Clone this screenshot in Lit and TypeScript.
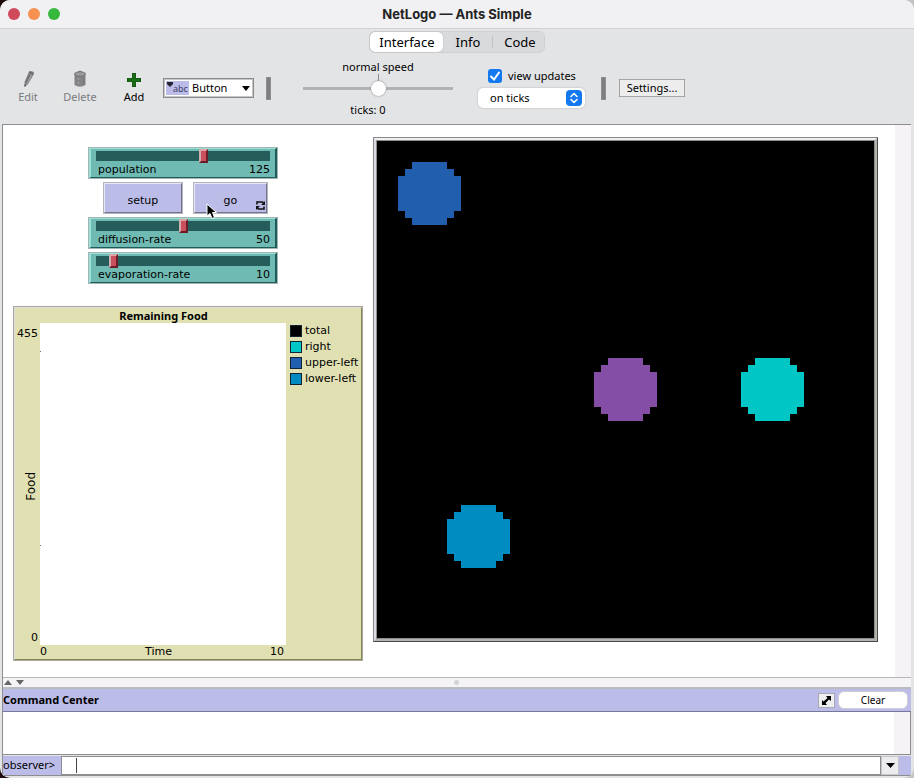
import { LitElement, html, css, svg } from "lit";
import { customElement, property } from "lit/decorators.js";

const PATCHES = 71;

/** Rows of one nine-patch-wide disc: [inset, top, height]. */
const DISC_ROWS = [
  [2, 0, 9],
  [1, 1, 7],
  [0, 2, 5],
];

const DISCS = [
  { name: "upper-left food", x: -28, y: 28, color: "#215fae" },
  { name: "nest", x: 0, y: 0, color: "#844ea7" },
  { name: "right food", x: 21, y: 0, color: "#00c6c6" },
  { name: "lower-left food", x: -21, y: -21, color: "#008cc1" },
];

const PENS = [
  { name: "total", color: "#000000" },
  { name: "right", color: "#00c6c6" },
  { name: "upper-left", color: "#215fae" },
  { name: "lower-left", color: "#008cc1" },
];

@customElement("model-slider")
class ModelSlider extends LitElement {
  @property() name = "";
  @property({ type: Number }) value = 0;
  @property({ type: Number }) max = 100;

  static styles = css`
    :host {
      display: block;
      box-sizing: border-box;
      height: 32px;
      padding: 0 5px;
      background: #6fbab2;
      border: 3px solid;
      border-width: 2px 3px 2px 3px;
      border-color: #9adfd8 #1f5c58 #1f5c58 #9adfd8;
      outline: 1px solid #a3b6b4;
      outline-offset: -1px;
      font: 11px/14px "DejaVu Sans", sans-serif;
      color: #000;
    }
    .range {
      appearance: none;
      display: block;
      box-sizing: border-box;
      width: 100%;
      height: 14px;
      margin: 0;
      background: linear-gradient(#265c59, #265c59) center 2px / 100% 10px no-repeat;
    }
    .range::-webkit-slider-thumb {
      appearance: none;
      box-sizing: border-box;
      width: 9px;
      height: 14px;
      background: #c9505c;
      border: 2px solid;
      border-color: #dfa3a3 #6b1e28 #6b1e28 #cdb0b0;
    }
    .caption {
      display: flex;
      justify-content: space-between;
      padding-left: 2px;
    }
  `;

  render() {
    return html`
      <input class="range" id="range" type="range" min="0" max=${this.max} .value=${String(this.value)} />
      <div class="caption">
        <label for="range">${this.name}</label>
        <output for="range">${this.value}</output>
      </div>
    `;
  }
}

@customElement("world-view")
class WorldView extends LitElement {
  static styles = css`
    :host {
      display: block;
      box-sizing: border-box;
      border: 1px solid;
      border-color: #8a8a8a #4a4a4a #4a4a4a #8a8a8a;
    }
    .bevel {
      border: 2px solid;
      border-color: #efefef #b4b4ae #b4b4ae #dcdce4;
    }
    .world {
      display: block;
      width: 100%;
      box-sizing: border-box;
      border: 1px solid #8e8e8e;
      background: #000;
    }
  `;

  render() {
    const mid = (PATCHES - 1) / 2;
    return html`
      <div class="bevel">
        <svg class="world" viewBox="0 0 71 71" shape-rendering="crispEdges" role="img" aria-label="World">
          ${DISCS.map(
            (d) => svg`<g fill=${d.color} aria-label=${d.name}>
              ${DISC_ROWS.map(
                ([inset, top, height]) => svg`<rect
                  x=${mid + d.x - 4 + inset} y=${mid - d.y - 4 + top}
                  width=${9 - inset * 2} height=${height}></rect>`
              )}
            </g>`
          )}
        </svg>
      </div>
    `;
  }
}

@customElement("model-plot")
class ModelPlot extends LitElement {
  static styles = css`
    :host {
      display: grid;
      box-sizing: border-box;
      height: 355px;
      grid-template: 15px 1fr 14px / 25px 1fr 75px;
      background: #e0e0b3;
      border: 2px solid;
      border-color: #dedee0 #85854f #85854f #dedee0;
      outline: 1px solid #a8a8a0;
      outline-offset: -1px;
      font: 11px/14px "DejaVu Sans", sans-serif;
      color: #000;
    }
    .title {
      grid-column: 1 / 3;
      margin: 0;
      padding-left: 26px;
      text-align: center;
      font: bold 11px/15px "Noto Sans", sans-serif;
    }
    .y-axis {
      grid-column: 1;
      grid-row: 2;
      display: flex;
      flex-direction: column;
      justify-content: space-between;
      align-items: flex-end;
      padding: 4px 2px 0 0;
    }
    .y-name {
      writing-mode: vertical-rl;
      rotate: 180deg;
      font-size: 12px;
    }
    .area {
      background: linear-gradient(#777, #777) 0 28px / 1px 1px no-repeat, linear-gradient(#777, #777) 0 222px / 1px 1px
        no-repeat, #fff;
      grid-column: 2;
      grid-row: 2;
    }
    .x-axis {
      grid-column: 2;
      grid-row: 3;
      display: flex;
      justify-content: space-between;
      padding-right: 2px;
    }
    .legend {
      grid-column: 3;
      grid-row: 2;
      list-style: none;
      margin: 0;
      padding: 0 0 0 4px;
    }
    .pen {
      display: flex;
      align-items: center;
      gap: 3px;
      height: 16px;
      white-space: nowrap;
    }
    .swatch {
      box-sizing: border-box;
      flex: none;
      width: 12px;
      height: 12px;
      border: 1px solid #123;
    }
  `;

  render() {
    return html`
      <h2 class="title">Remaining Food</h2>
      <div class="y-axis"><span>455</span><span class="y-name">Food</span><span>0</span></div>
      <div class="area"></div>
      <div class="x-axis"><span>0</span><span>Time</span><span>10</span></div>
      <ul class="legend">
        ${PENS.map(
          (p) => html`<li class="pen"><span class="swatch" style="background:${p.color}"></span>${p.name}</li>`
        )}
      </ul>
    `;
  }
}

@customElement("app-root")
class AppRoot extends LitElement {
  static styles = css`
    :host {
      display: block;
      min-height: 100vh;
      background: linear-gradient(90deg, #1d0a0c 50%, #c4c4c6 50%);
      font: 11px/14px "Noto Sans", sans-serif;
      color: #000;
    }
    * {
      box-sizing: border-box;
    }
    button,
    select,
    input {
      font: inherit;
      color: inherit;
    }
    .window {
      display: flex;
      flex-direction: column;
      min-height: 100vh;
      background: #e3e4e6;
      border-radius: 10px;
      overflow: hidden;
    }
    .titlebar {
      display: grid;
      grid-template-columns: 1fr auto 1fr;
      align-items: center;
      height: 29px;
      padding: 0 8px;
      background: #f1f0f2;
      border-bottom: 1px solid #d2d2d4;
    }
    .lights {
      display: flex;
      gap: 8px;
    }
    .light {
      width: 12px;
      height: 12px;
      padding: 0;
      border: 0;
      border-radius: 50%;
    }
    .close {
      background: #d04a5c;
    }
    .minimise {
      background: #f79150;
    }
    .maximise {
      background: #36b83c;
    }
    .title {
      margin: 0;
      font: bold 13px/16px Inter, sans-serif;
      color: #222;
    }
    .tabs {
      display: flex;
      align-self: center;
      margin-top: 2px;
      height: 22px;
      background: #d9dadc;
      border: 1px solid #d0d0d2;
      border-radius: 6px;
      font-size: 13px;
    }
    .tab {
      position: relative;
      padding: 0 12px;
      border: 0;
      border-radius: 5px;
      background: none;
      line-height: 18px;
    }
    .tab.selected {
      padding: 0 9px;
      background: #fff;
      box-shadow: 0 0 1px #888;
    }
    .tab + .tab + .tab {
      padding-right: 8px;
    }
    .tab + .tab + .tab::before {
      content: "";
      position: absolute;
      left: 0;
      top: 4px;
      height: 12px;
      border-left: 1px solid #c2c2c4;
    }
    .toolbar {
      display: flex;
      align-items: center;
      height: 71px;
      padding: 0 0 1px 15px;
    }
    .tool {
      display: flex;
      flex-direction: column;
      align-items: center;
      gap: 2px;
      padding: 0 0 2px;
      border: 0;
      background: none;
      color: #000;
    }
    .tool:disabled {
      color: #7c7c7e;
    }
    .tool svg {
      display: block;
    }
    .edit {
      width: 26px;
    }
    .delete {
      width: 36px;
      margin-left: 21px;
    }
    .add {
      width: 26px;
      margin-left: 23px;
    }
    .picker {
      position: relative;
      margin-left: 16px;
    }
    .picker select {
      appearance: none;
      display: block;
      width: 91px;
      height: 20px;
      padding: 0 0 0 28px;
      border: 1px solid #8c8c8e;
      outline: 1px solid #c6c6c8;
      outline-offset: -2px;
      border-radius: 0;
      background: #fff;
    }
    .picker-icon {
      position: absolute;
      left: 3px;
      top: 3px;
      display: flex;
      width: 23px;
      height: 14px;
      background: #bcbce9;
      pointer-events: none;
    }
    .picker-icon svg {
      flex: none;
      margin: 1px 0 0 1px;
    }
    .picker-text {
      color: #3d3d66;
      font: 9px/16px "Noto Sans", sans-serif;
    }
    .arrow {
      position: absolute;
      right: 4px;
      top: 8px;
      pointer-events: none;
    }
    .divider {
      width: 5px;
      height: 23px;
      margin-left: 12px;
      background: #7e7e80;
      border: 1px solid #8e8e90;
    }
    .speed {
      display: flex;
      flex-direction: column;
      align-items: center;
      width: 150px;
      margin-left: 32px;
    }
    .notch {
      width: 1px;
      height: 7px;
      background: #8c8c8e;
    }
    .speed-range {
      appearance: none;
      width: 100%;
      height: 15px;
      margin: 0 0 7px;
      background: linear-gradient(#b2b2b4, #b2b2b4) center / 100% 3px no-repeat;
    }
    .speed-range::-webkit-slider-thumb {
      appearance: none;
      width: 15px;
      height: 15px;
      border-radius: 50%;
      background: #fff;
      box-shadow: 0 0 2px #777;
    }
    .ticks {
      margin-right: 20px;
    }
    .updates {
      display: flex;
      flex-direction: column;
      gap: 5px;
      width: 107px;
      margin-left: 25px;
    }
    .check {
      display: flex;
      align-items: center;
      gap: 6px;
      padding-left: 10px;
    }
    .check input {
      appearance: none;
      width: 14px;
      height: 14px;
      margin: 0;
      border-radius: 3px;
      background: #1479ee;
    }
    .check-box {
      position: relative;
      display: flex;
    }
    .check-box svg {
      position: absolute;
      inset: 0;
      pointer-events: none;
    }
    .mode {
      position: relative;
    }
    .mode select {
      appearance: none;
      display: block;
      width: 100%;
      height: 20px;
      padding: 0 12px;
      border: 0;
      border-radius: 5px;
      background: #fff;
      box-shadow: 0 0 2px #aaa;
    }
    .mode svg {
      position: absolute;
      right: 3px;
      top: 2px;
      pointer-events: none;
    }
    .updates + .divider {
      margin-left: 16px;
    }
    .settings {
      width: 66px;
      height: 18px;
      margin-left: 13px;
      padding: 0;
      border: 1px solid #a4a4a6;
      background: #ededee;
      line-height: 14px;
    }
    .body {
      display: flex;
      flex: 1;
      flex-direction: column;
      margin: 0 3px 2px 2px;
      border: solid #8e8e90;
      border-width: 1px 0 1px 1px;
      background: #fff;
    }
    .workspace {
      display: flex;
      flex: 1;
      align-items: flex-start;
      gap: 10px;
      padding: 12px 0 16px 10px;
      background: linear-gradient(#f5f3f6, #f5f3f6) right / 16px 100% no-repeat;
    }
    .side {
      flex: none;
      width: 350px;
      padding-top: 10px;
    }
    .controls {
      display: flex;
      flex-direction: column;
      gap: 3px;
      width: 190px;
      margin: 0 0 22px 75px;
    }
    .actions {
      display: flex;
      gap: 10px;
      padding: 0 10px 0 15px;
    }
    .action {
      position: relative;
      height: 32px;
      padding: 5px 0 0;
      border: 2px solid;
      border-color: #e6e6f4 #74748e #74748e #e6e6f4;
      outline: 1px solid #b4b4bc;
      outline-offset: -1px;
      background: #bcbce9;
      font: 11px/14px "DejaVu Sans", sans-serif;
    }
    .setup {
      flex: 80;
    }
    .go {
      flex: 75;
    }
    .forever {
      position: absolute;
      right: 1px;
      bottom: 2px;
    }
    .pointer {
      position: absolute;
      left: 11px;
      top: 19px;
      z-index: 1;
    }
    .world {
      flex: none;
      width: 505px;
    }
    .split {
      display: flex;
      align-items: center;
      gap: 4px;
      height: 10px;
      padding-left: 1px;
      background: #f5f3f6;
      border-top: 1px solid #b6b6b8;
    }
    .grip {
      flex: 1;
      display: flex;
      justify-content: center;
      padding-right: 26px;
    }
    .grip span {
      width: 5px;
      height: 5px;
      border-radius: 50%;
      background: #d4d4d6;
    }
    .center-head {
      display: flex;
      align-items: center;
      gap: 3px;
      height: 25px;
      padding: 0 3px 0 0;
      background: #bcbce9;
      border-top: 2px solid #bbbbc2;
      border-bottom: 1px solid #77779c;
    }
    .center-title {
      flex: 1;
      margin: 0;
      font-size: 11px;
      line-height: 14px;
    }
    .expand {
      display: flex;
      align-items: center;
      justify-content: center;
      width: 17px;
      height: 15px;
      padding: 0;
      border: 1px solid #a9a9b4;
      background: #eeeef0;
    }
    .clear {
      width: 70px;
      height: 18px;
      padding: 0;
      border: 1px solid #cfcfd6;
      border-radius: 6px;
      background: #fff;
      font-size: 10px;
    }
    .output {
      height: 43px;
      border-right: 1px solid #8e8e90;
      border-bottom: 1px solid #8e8e90;
      background: linear-gradient(#f5f3f6, #f5f3f6) right / 16px 100% no-repeat;
    }
    .prompt {
      display: flex;
      height: 20px;
      padding-top: 1px;
      background: #e3e4e6;
    }
    .prompt label {
      width: 58px;
      background: #bcbce9;
      font: 11px/18px "Noto Sans", sans-serif;
      white-space: nowrap;
    }
    .entry {
      display: flex;
      flex: 1;
      align-items: center;
      padding-left: 14px;
      border: 1px solid #8e8e90;
      background: #fff;
    }
    .caret {
      width: 1px;
      height: 15px;
      background: #444;
    }
    .entry input {
      flex: 1;
      min-width: 0;
      height: 16px;
      padding: 0;
      border: 0;
      outline: 0;
      background: none;
    }
    .history {
      display: flex;
      align-items: center;
      justify-content: center;
      width: 18px;
      padding: 0;
      border: 1px solid #c6c6c8;
      background: #ececee;
    }
    .corner {
      width: 12px;
      background: #bcbce9;
    }
  `;

  render() {
    return html`
      <main class="window">
        <header class="titlebar">
          <div class="lights">
            <button class="light close" aria-label="Close"></button>
            <button class="light minimise" aria-label="Minimise"></button>
            <button class="light maximise" aria-label="Zoom"></button>
          </div>
          <h1 class="title">NetLogo — Ants Simple</h1>
        </header>

        <nav class="tabs">
          <button class="tab selected">Interface</button>
          <button class="tab">Info</button>
          <button class="tab">Code</button>
        </nav>

        <div class="toolbar">
          <button class="tool edit" disabled>
            <svg width="16" height="18" viewBox="0 0 16 18">
              <path d="M9 1.5 L11 1 L14 2 L13.5 5 L8 14 L5 16.5 L4.5 16 L4.5 12 Z" fill="#858587" />
              <path d="M10 4.5 L6 12" stroke="#666668" fill="none" />
              <path d="M11.5 5 L7.5 12.5" stroke="#a8a8aa" />
              <path d="M9 2 L13.5 4" stroke="#5d5d5f" />
              <path d="M4.5 14.5 L6.5 15.2 L4.5 17 Z" fill="#444" />
            </svg>
            Edit
          </button>
          <button class="tool delete" disabled>
            <svg width="16" height="18" viewBox="0 0 16 18">
              <path d="M2.5 4 V15 Q8 18.5 13.5 15 V4 Z" fill="#848486" />
              <ellipse cx="8" cy="4" rx="5.5" ry="2.2" fill="#9c9c9e" stroke="#747476" />
              <path d="M6 2 Q8 0 10 2" stroke="#747476" fill="none" />
              <path d="M11.5 7 V14" stroke="#737375" />
              <path d="M6.5 8 V15" stroke="#a4a4a6" stroke-dasharray="2 2" />
            </svg>
            Delete
          </button>
          <button class="tool add">
            <svg width="16" height="18" viewBox="0 0 16 18">
              <path d="M6 3h4v5h5v4h-5v5H6v-5H1V8h5z" fill="#145c14" />
              <path d="M7 4h2v5h5v2H9v5H7v-5H2V9h5z" fill="#187018" />
            </svg>
            Add
          </button>
          <div class="picker">
            <select aria-label="Widget type">
              <option>Button</option>
            </select>
            <span class="picker-icon" aria-hidden="true">
              <svg width="6" height="5" viewBox="0 0 6 5"><path d="M0 0h6v2L3 5 0 2z" fill="#223" /></svg>
              <span class="picker-text">abc</span>
            </span>
            <svg class="arrow" width="8" height="5" viewBox="0 0 8 5"><path d="M0 0h8L4 5z" /></svg>
          </div>
          <div class="divider"></div>
          <div class="speed">
            <label for="speed">normal speed</label>
            <span class="notch"></span>
            <input class="speed-range" id="speed" type="range" min="0" max="100" value="50" />
            <span class="ticks">ticks: 0</span>
          </div>
          <div class="updates">
            <label class="check">
              <span class="check-box">
                <input type="checkbox" checked />
                <svg width="14" height="14" viewBox="0 0 14 14">
                  <path d="M3 7.5 L6 10.5 L11 3.5" fill="none" stroke="#fff" stroke-width="2" stroke-linecap="round" />
                </svg>
              </span>
              view updates
            </label>
            <div class="mode">
              <select aria-label="Update mode">
                <option>on ticks</option>
              </select>
              <svg width="16" height="16" viewBox="0 0 16 16">
                <rect width="16" height="16" rx="4" fill="#1479ee" />
                <path d="M5 6.5 L8 3.5 L11 6.5 M5 9.5 L8 12.5 L11 9.5" fill="none" stroke="#fff" stroke-width="1.5"
                  stroke-linecap="round" stroke-linejoin="round" />
              </svg>
            </div>
          </div>
          <div class="divider"></div>
          <button class="settings">Settings...</button>
        </div>

        <div class="body">
          <section class="workspace">
            <div class="side">
              <div class="controls">
                <model-slider name="population" value="125" max="200"></model-slider>
                <div class="actions">
                  <button class="action setup">setup</button>
                  <button class="action go">
                    go
                    <svg class="forever" width="9" height="9" viewBox="0 0 9 9" fill="none" stroke="#111">
                      <path d="M1 3.5 V1 H6.5 L8 2.5" stroke-width="1.6" />
                      <path d="M8 5.5 V8 H2.5 L1 6.5" stroke-width="1.6" />
                      <path d="M9 0 V4 H5 Z M0 9 V5 H4 Z" fill="#111" stroke="none" />
                    </svg>
                    <svg class="pointer" width="12" height="17" viewBox="0 0 12 17">
                      <path d="M1 1 V13 L4 10.5 L6 15.5 L8.5 14.5 L6.5 9.5 H10.5 Z" stroke="#fff" />
                    </svg>
                  </button>
                </div>
                <model-slider name="diffusion-rate" value="50" max="100"></model-slider>
                <model-slider name="evaporation-rate" value="10" max="125"></model-slider>
              </div>
              <model-plot></model-plot>
            </div>
            <world-view class="world"></world-view>
          </section>

          <div class="split">
            <svg width="8" height="5" viewBox="0 0 8 5"><path d="M0 5h8L4 0z" fill="#666" /></svg>
            <svg width="8" height="5" viewBox="0 0 8 5"><path d="M0 0h8L4 5z" fill="#666" /></svg>
            <div class="grip"><span></span></div>
          </div>

          <section>
            <header class="center-head">
              <h2 class="center-title">Command Center</h2>
              <button class="expand" aria-label="Toggle location">
                <svg width="11" height="11" viewBox="0 0 11 11">
                  <path d="M5 1h5v5L8 4.5 4.5 8 6 10H1V5l1.5 1.5L6.5 3z" />
                </svg>
              </button>
              <button class="clear">Clear</button>
            </header>
            <div class="output"></div>
            <div class="prompt">
              <label for="command">observer&gt;</label>
              <div class="entry">
                <span class="caret"></span>
                <input id="command" type="text" />
              </div>
              <button class="history" aria-label="History">
                <svg width="9" height="5" viewBox="0 0 9 5"><path d="M0 0h9L4.5 5z" /></svg>
              </button>
              <span class="corner"></span>
            </div>
          </section>
        </div>
      </main>
    `;
  }
}
